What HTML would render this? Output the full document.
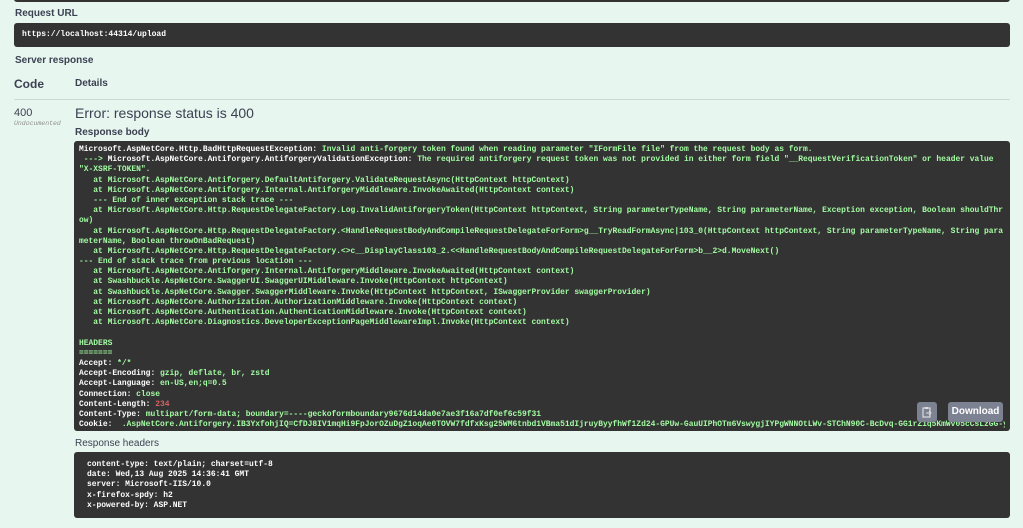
<!DOCTYPE html>
<html><head><meta charset="utf-8"><style>
*{margin:0;padding:0;box-sizing:border-box}
body{width:1023px;height:528px;background:#e8f6f0;font-family:"Liberation Sans",sans-serif;color:#3b4151;position:relative;overflow:hidden}
.abs{position:absolute}
.lbl{font-size:10px;font-weight:bold;color:#3b4151}
.dark{background:#333;border-radius:3px}
pre{font-family:"Liberation Mono",monospace;font-size:7.95px;line-height:10.19px;font-weight:bold;white-space:pre;overflow:hidden;color:#a2fca2}
.w{color:#fff}
.r{color:#d36363}
</style></head><body>
<div class="abs dark" style="left:14px;top:-4px;width:996px;height:6px"></div>
<div class="abs lbl" style="left:15px;top:8px">Request URL</div>
<div class="abs dark" style="left:14px;top:23px;width:996px;height:24px"></div>
<pre class="abs w" style="left:22px;top:30px;font-size:8px">https://localhost:44314/upload</pre>
<div class="abs lbl" style="left:15px;top:55px">Server response</div>
<div class="abs" style="left:14px;top:77px;font-size:12px;font-weight:bold">Code</div>
<div class="abs lbl" style="left:75px;top:78px">Details</div>
<div class="abs" style="left:14px;top:99px;width:996px;height:1px;background:#cfd8d4"></div>
<div class="abs" style="left:14px;top:107px;font-size:11px">400</div>
<div class="abs" style="left:14px;top:120px;font-size:6.5px;font-style:italic;font-family:'Liberation Mono',monospace;color:#909090">Undocumented</div>
<div class="abs" style="left:75px;top:105px;font-size:14px">Error: response status is 400</div>
<div class="abs lbl" style="left:75px;top:127px">Response body</div>
<div class="abs dark" style="left:74px;top:141px;width:936px;height:290px"></div>
<pre class="abs" style="left:79px;top:145px;width:926px"><span class="w">Microsoft.AspNetCore.Http.BadHttpRequestException:</span> Invalid anti-forgery token found when reading parameter "IFormFile file" from the request body as form.
 ---&gt; <span class="w">Microsoft.AspNetCore.Antiforgery.AntiforgeryValidationException:</span> The required antiforgery request token was not provided in either form field "__RequestVerificationToken" or header value
"X-XSRF-TOKEN".
   at Microsoft.AspNetCore.Antiforgery.DefaultAntiforgery.ValidateRequestAsync(HttpContext httpContext)
   at Microsoft.AspNetCore.Antiforgery.Internal.AntiforgeryMiddleware.InvokeAwaited(HttpContext context)
   --- End of inner exception stack trace ---
   at Microsoft.AspNetCore.Http.RequestDelegateFactory.Log.InvalidAntiforgeryToken(HttpContext httpContext, String parameterTypeName, String parameterName, Exception exception, Boolean shouldThr
ow)
   at Microsoft.AspNetCore.Http.RequestDelegateFactory.&lt;HandleRequestBodyAndCompileRequestDelegateForForm&gt;g__TryReadFormAsync|103_0(HttpContext httpContext, String parameterTypeName, String para
meterName, Boolean throwOnBadRequest)
   at Microsoft.AspNetCore.Http.RequestDelegateFactory.&lt;&gt;c__DisplayClass103_2.&lt;&lt;HandleRequestBodyAndCompileRequestDelegateForForm&gt;b__2&gt;d.MoveNext()
--- End of stack trace from previous location ---
   at Microsoft.AspNetCore.Antiforgery.Internal.AntiforgeryMiddleware.InvokeAwaited(HttpContext context)
   at Swashbuckle.AspNetCore.SwaggerUI.SwaggerUIMiddleware.Invoke(HttpContext httpContext)
   at Swashbuckle.AspNetCore.Swagger.SwaggerMiddleware.Invoke(HttpContext httpContext, ISwaggerProvider swaggerProvider)
   at Microsoft.AspNetCore.Authorization.AuthorizationMiddleware.Invoke(HttpContext context)
   at Microsoft.AspNetCore.Authentication.AuthenticationMiddleware.Invoke(HttpContext context)
   at Microsoft.AspNetCore.Diagnostics.DeveloperExceptionPageMiddlewareImpl.Invoke(HttpContext context)

HEADERS
=======
<span class="w">Accept:</span> */*
<span class="w">Accept-Encoding:</span> gzip, deflate, br, zstd
<span class="w">Accept-Language:</span> en-US,en;q=0.5
<span class="w">Connection:</span> close
<span class="w">Content-Length:</span> <span class="r">234</span>
<span class="w">Content-Type:</span> multipart/form-data; boundary=----geckoformboundary9676d14da0e7ae3f16a7df0ef6c59f31
<span class="w">Cookie:</span>  .AspNetCore.Antiforgery.IB3YxfohjIQ=CfDJ8IV1mqHi9FpJorOZuDgZ1oqAe0TOVW7fdfxKsg25WM6tnbd1VBma51dIjruyByyfhWf1Zd24-GPUw-GauUIPhOTm6VswygjIYPgWNNOtLWv-STChN90C-BcDvq-GG1rZ1q5KmWv05cCsLzGG-y</pre>
<div class="abs" style="left:917px;top:402px;width:20px;height:20px;background:#7d8293;border-radius:3px"></div>
<svg class="abs" style="left:922px;top:406px" width="10" height="12" viewBox="0 0 10 12"><rect x="1" y="2" width="7" height="9" fill="none" stroke="#ddd" stroke-width="1.2"/><rect x="3" y="1" width="3" height="2" fill="#ddd"/><path d="M4 7h5M7 5l2 2-2 2" stroke="#ddd" fill="none"/></svg>
<div class="abs" style="left:948px;top:402px;width:55px;height:20px;background:#7d8293;border-radius:3px;color:#fff;font-size:10px;font-weight:bold;text-align:center;line-height:20px">Download</div>
<div class="abs lbl" style="left:75px;top:438px;font-weight:normal">Response headers</div>
<div class="abs dark" style="left:74px;top:452px;width:936px;height:66px"></div>
<pre class="abs w" style="left:87px;top:460px">content-type: text/plain; charset=utf-8
date: Wed,13 Aug 2025 14:36:41 GMT
server: Microsoft-IIS/10.0
x-firefox-spdy: h2
x-powered-by: ASP.NET</pre>
</body></html>
